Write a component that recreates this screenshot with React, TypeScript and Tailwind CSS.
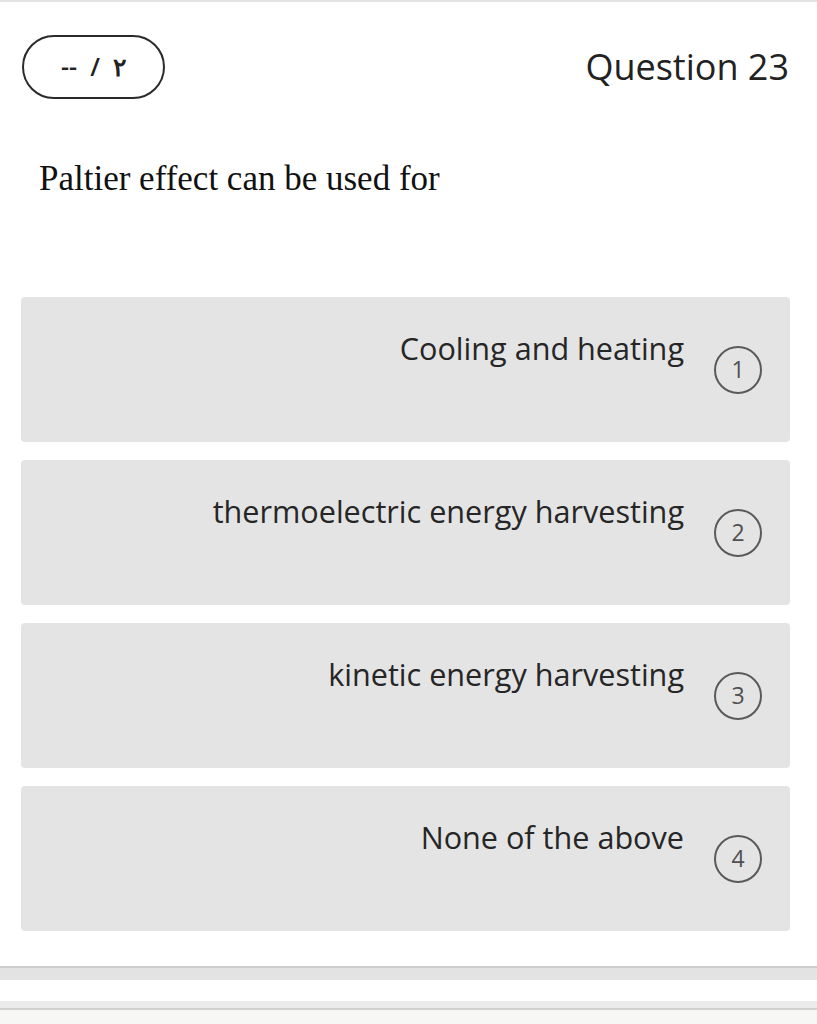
const options = [
  'Cooling and heating',
  'thermoelectric energy harvesting',
  'kinetic energy harvesting',
  'None of the above',
];

export default function App() {
  return (
    <div className="w-[817px] h-[1024px] bg-white overflow-hidden flex flex-col font-['Open_Sans',sans-serif] text-[#222]">
      <div className="h-[2px] bg-[#e3e3e3]" />

      <div className="mt-[33px] h-[64px] flex items-center justify-between pl-[22px] pr-[28px]">
        <div className="w-[143px] h-[64px] rounded-full border-2 border-[#2a2a2a] flex items-center justify-center text-[25px] font-semibold">
          <span dir="ltr" className="whitespace-pre">--  /  ٢</span>
        </div>
        <div className="text-[36px] leading-none">Question 23</div>
      </div>

      <div className="mt-[60px] pl-[39px] font-['Liberation_Serif',serif] text-[35px] leading-[39px] text-[#111]">
        Paltier effect can be used for
      </div>

      <div className="mt-[99px] pl-[21px] pr-[27px] flex flex-col gap-[18px]">
        {options.map((opt, i) => (
          <div key={opt} className="h-[145px] rounded-[4px] bg-[#e4e4e4] flex justify-end items-center pr-[28px]">
            <div className="self-start pt-[31px] text-[30.6px] leading-[41px] text-[#262626]">{opt}</div>
            <div className="ml-[30px] w-[48px] h-[48px] rounded-full border-2 border-[#5a5a5a] flex items-center justify-center text-[23px] text-[#505050]">
              {i + 1}
            </div>
          </div>
        ))}
      </div>

      <div className="mt-[35px] h-[14px] bg-[#e3e3e3] border-t-2 border-[#cdcdcd]" />
      <div className="h-[21px] bg-white" />
      <div className="h-[9px] bg-[#ebebeb] border-b-2 border-[#d0d0d0]" />
      <div className="flex-1 bg-[#f7f7f5]" />
    </div>
  );
}
